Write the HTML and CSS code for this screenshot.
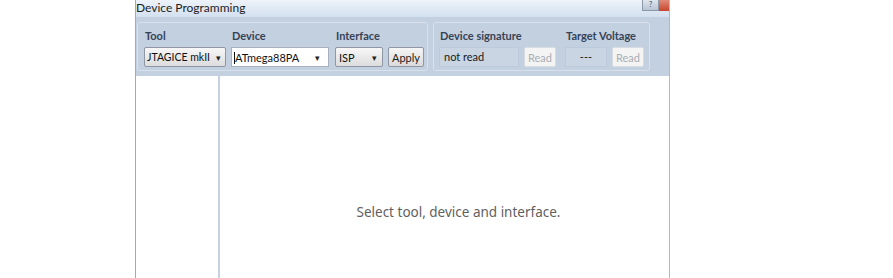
FILE: index.html
```html
<!DOCTYPE html>
<html lang="en">
<head>
<meta charset="UTF-8">
<title>Device Programming</title>
<link rel="stylesheet" href="styles.css">
</head>
<body>
<div class="window">
  <div class="titlebar">
    <span class="title">Device Programming</span>
    <div class="caption-buttons">
      <span class="help-btn">?</span>
      <span class="close-btn"></span>
    </div>
  </div>
  <div class="toolbar">
    <div class="group prog-group">
      <div class="field">
        <label>Tool</label>
        <div class="combo tool-combo"><span>JTAGICE mkII</span><span class="arrow">&#9662;</span></div>
      </div>
      <div class="field">
        <label>Device</label>
        <div class="combo device-combo"><span><span class="caret"></span>ATmega88PA</span><span class="arrow">&#9662;</span></div>
      </div>
      <div class="field">
        <label>Interface</label>
        <div class="row">
          <div class="combo isp-combo"><span>ISP</span><span class="arrow">&#9662;</span></div>
          <button class="btn apply-btn">Apply</button>
        </div>
      </div>
    </div>
    <div class="group read-group">
      <div class="field">
        <label>Device signature</label>
        <div class="row">
          <div class="readout sig-box">not read</div>
          <button class="btn" disabled>Read</button>
        </div>
      </div>
      <div class="field">
        <label>Target Voltage</label>
        <div class="row">
          <div class="readout volt-box">---</div>
          <button class="btn" disabled>Read</button>
        </div>
      </div>
    </div>
  </div>
  <div class="content">
    <div class="sidebar"></div>
    <div class="main">Select tool, device and interface.</div>
  </div>
</div>
</body>
</html>
```

FILE: styles.css
```css
body {
  margin: 0;
  background: #ffffff;
  font-family: Lato, "Noto Sans", sans-serif;
  font-size: 11px;
  color: #1e2a3a;
}
.window {
  margin-left: 135px;
  width: 533px;
  height: 278px;
  border-left: 1px solid #a9a9a9;
  border-right: 1px solid #b8b8b8;
  display: flex;
  flex-direction: column;
  overflow: hidden;
}
.titlebar {
  height: 17px;
  background: linear-gradient(to bottom, #edf3f9, #d3e0ef);
  display: flex;
  justify-content: space-between;
  align-items: flex-start;
}
.title {
  font-size: 12px;
  color: #1c1c1c;
  line-height: 16px;
}
.caption-buttons {
  display: flex;
  height: 11px;
}
.help-btn {
  width: 15px;
  height: 10px;
  background: linear-gradient(to bottom, #dfe6ee, #b9c5d3);
  border: 1px solid #8c99a8;
  border-top: none;
  font-size: 8px;
  line-height: 9px;
  text-align: center;
  color: #4b5563;
}
.close-btn {
  width: 10px;
  height: 11px;
  background: linear-gradient(to bottom, #e08a78, #c9452e);
}
.toolbar {
  background: #c3d0e0;
  padding: 5px 0 5px 1px;
  display: flex;
  gap: 5px;
}
.group {
  border: 1px solid #d8e1ec;
  border-radius: 3px;
  padding: 3px 3px 3px 6px;
  display: flex;
}
.field {
  display: flex;
  flex-direction: column;
}
.field label {
  font-weight: 700;
  font-size: 11px;
  color: #364357;
  height: 14px;
  line-height: 14px;
  padding: 3px 0 0 1px;
  margin-bottom: 4px;
}
.row {
  display: flex;
}
.combo {
  box-sizing: border-box;
  height: 20px;
  border: 1px solid #8e97a3;
  border-radius: 2px;
  background: linear-gradient(to bottom, #f7f7f7, #dcdcdc);
  display: flex;
  justify-content: space-between;
  align-items: center;
  padding: 0 5px 0 3px;
  font-size: 11px;
  color: #111;
}
.arrow {
  font-size: 9px;
  color: #222;
}
.tool-combo {
  width: 82px;
  margin-right: 5px;
  font-size: 10.5px;
  padding-left: 2px;
  padding-right: 4px;
}
.device-combo {
  width: 98px;
  margin-right: 6px;
  background: #ffffff;
  border-color: #a7b1bd;
  border-radius: 0;
  padding-left: 2px;
  padding-right: 8px;
}
.caret {
  display: inline-block;
  width: 1px;
  height: 12px;
  background: #111;
  vertical-align: -2px;
}
.isp-combo {
  width: 48px;
  margin-right: 5px;
}
.btn {
  box-sizing: border-box;
  height: 20px;
  padding: 0;
  border: 1px solid #8e97a3;
  border-radius: 2px;
  background: linear-gradient(to bottom, #f5f5f5, #dadada);
  font-family: inherit;
  font-size: 11px;
  color: #1a1a1a;
}
.apply-btn {
  width: 36px;
}
.btn:disabled {
  color: #a8aeb6;
  border-color: #d8dde3;
  background: #f4f4f4;
  width: 32px;
}
.read-group {
  padding-left: 5px;
  padding-right: 5px;
}
.readout {
  box-sizing: border-box;
  height: 20px;
  background: #c9d5e3;
  border: 1px solid #bccadb;
  line-height: 18px;
  padding-left: 4px;
  font-size: 11px;
  color: #1a1a1a;
  margin-right: 5px;
}
.sig-box {
  width: 80px;
}
.read-group .field:first-child {
  margin-right: 9px;
}
.volt-box {
  width: 42px;
  text-align: center;
  padding-left: 0;
}
.content {
  flex: 1;
  display: flex;
  background: #ffffff;
}
.sidebar {
  width: 82px;
  border-right: 2px solid #c4d1e1;
}
.main {
  flex: 1;
  display: flex;
  justify-content: center;
  align-items: center;
  padding: 70px 0 0 28px;
  font-family: "Noto Sans", sans-serif;
  font-size: 13.5px;
  color: #5f5f5f;
}
```
